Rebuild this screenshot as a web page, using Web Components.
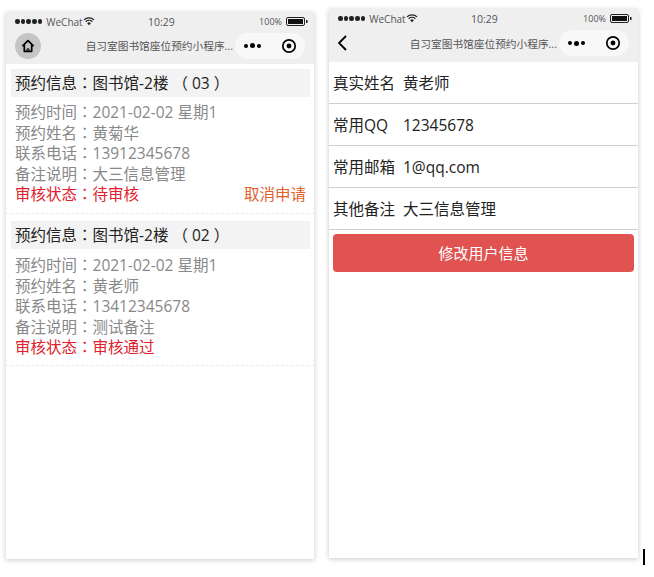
<!DOCTYPE html>
<html lang="zh">
<head>
<meta charset="utf-8">
<title>自习室图书馆座位预约小程序</title>
<style>
html, body { margin: 0; padding: 0; background: #fff; }
body { font-family: "Open Sans", "Noto Sans CJK SC", sans-serif; width: 654px; height: 577px; overflow: hidden; position: relative; }
#shots { display: flex; align-items: flex-start; }
#left { margin: 12px 0 0 6px; }
#right { margin: 9px 0 0 15px; }
#mark { position: absolute; left: 643px; top: 549px; width: 2px; height: 16px; background: #000; }
</style>
</head>
<body>
<div id="shots">
  <phone-frame id="left" nav="home" style="--w:308px;--h:547px;--top:52px;--nb:5px">
    <booking-card head="预约信息：图书馆-2楼 （ 03 ）" time="2021-02-02 星期1" who="黄菊华" tel="13912345678" note="大三信息管理" state="待审核" cancel="取消申请"></booking-card>
    <booking-card head="预约信息：图书馆-2楼 （ 02 ）" time="2021-02-02 星期1" who="黄老师" tel="13412345678" note="测试备注" state="审核通过"></booking-card>
  </phone-frame>
  <phone-frame id="right" nav="back" style="--w:309px;--h:549px;--top:53px;--nb:5px">
    <form-row label="真实姓名">黄老师</form-row>
    <form-row label="常用QQ">12345678</form-row>
    <form-row label="常用邮箱">1@qq.com</form-row>
    <form-row label="其他备注">大三信息管理</form-row>
    <red-button>修改用户信息</red-button>
  </phone-frame>
</div>
<div id="mark"></div>

<script>
"use strict";

const PHONE_STYLE = `
<style>
:host {
  display: block;
  width: var(--w);
  height: var(--h);
  background: #fff;
  box-shadow: 0 1px 5px rgba(0,0,0,.22);
}
.top { background: #efefef; height: var(--top); display: flex; flex-direction: column; }
.status {
  height: 19px;
  flex: none;
  padding: 0 6px 0 9px;
  display: flex;
  align-items: center;
  font-size: 10px;
  color: #555;
  position: relative;
}
.dots { display: flex; gap: 1.2px; margin-right: 4px; }
.dots i { width: 4.5px; height: 4.5px; border-radius: 50%; background: #222; }
.clock { position: absolute; left: 142px; font-size: 10.5px; }
.pct { margin-left: auto; margin-right: 4px; font-size: 9px; }
.nav { flex: 1; display: flex; align-items: center; padding: 1px 9px var(--nb) 9px; }
.home {
  width: 26px; height: 26px; border-radius: 50%;
  background: #c5c5c5; display: flex; align-items: center; justify-content: center;
}
.back { width: 26px; height: 26px; display: flex; align-items: center; }
.title {
  flex: 1;
  text-align: right;
  font-size: 10.7px;
  color: #555;
  white-space: nowrap;
  overflow: hidden;
  padding-right: 2px;
}
.capsule {
  width: 70px; height: 26px; border-radius: 13px;
  background: #f8f8f8;
  display: flex; align-items: center; justify-content: space-between;
  padding: 0 8px 0 9px; box-sizing: border-box; flex: none;
}
.more { display: flex; align-items: center; gap: 2px; }
.more i { width: 4px; height: 4px; border-radius: 50%; background: #000; }
.more i:nth-child(2) { width: 5px; height: 5px; }
</style>
<div class="top">
  <div class="status">
    <span class="dots"><i></i><i></i><i></i><i></i><i></i></span>
    <span>WeChat</span>
    <svg class="wifi" width="12" height="9" viewBox="0 0 10 8">
      <path d="M.5 2.6a6.5 6.5 0 0 1 9 0M2 4.2a4.4 4.4 0 0 1 6 0" fill="none" stroke="#222" stroke-width="1"/>
      <path d="M3.4 5.5a2.3 2.3 0 0 1 3.2 0L5 7.4z" fill="#222"/>
    </svg>
    <span class="clock">10:29</span>
    <span class="pct">100%</span>
    <svg width="22" height="9" viewBox="0 0 22 9">
      <rect x=".5" y=".5" width="18" height="8" rx="1.5" fill="none" stroke="#222"/>
      <rect x="2" y="2" width="15" height="5" fill="#111"/>
      <rect x="20" y="3" width="1.5" height="3" fill="#222"/>
    </svg>
  </div>
  <div class="nav">
    <span class="lead"></span>
    <span class="title">自习室图书馆座位预约小程序...</span>
    <span class="capsule">
      <span class="more"><i></i><i></i><i></i></span>
      <svg width="16" height="16" viewBox="0 0 16 16">
        <circle cx="8" cy="8" r="6.2" fill="none" stroke="#000" stroke-width="1.7"/>
        <circle cx="8" cy="8" r="2.4" fill="#000"/>
      </svg>
    </span>
  </div>
</div>
<slot></slot>
`;

const NAV_ICONS = {
  home: `<span class="home"><svg width="16" height="16" viewBox="0 0 16 16">
    <path d="M2.4 8.2 8 2.6l5.6 5.6M4.3 7v6.3h7.4V7" fill="none" stroke="#000" stroke-width="1.7" stroke-linejoin="round"/>
    <path d="M7 13.3v-2.4h2v2.4" fill="none" stroke="#000" stroke-width="1"/>
  </svg></span>`,
  back: `<span class="back"><svg width="12" height="18" viewBox="0 0 12 18">
    <path d="M8 2 1 9l7 7" fill="none" stroke="#000" stroke-width="1.9"/>
  </svg></span>`
};

class PhoneFrame extends HTMLElement {
  constructor() {
    super();
    this.attachShadow({mode: 'open'}).innerHTML = PHONE_STYLE;
  }

  connectedCallback() {
    const kind = this.getAttribute('nav');
    this.shadowRoot.querySelector('.lead').outerHTML = NAV_ICONS[kind];
  }
}

// the reference has the wide colon centred, which is the TC form of the glyph
const COLON = '<span class="colon" lang="zh-TW">：</span>';

class BookingCard extends HTMLElement {
  constructor() {
    super();
    this.attachShadow({mode: 'open'});
  }

  connectedCallback() {
    const a = (n) => this.getAttribute(n) || '';
    const cancel = a('cancel') ? `<span class="cancel">${a('cancel')}</span>` : '';
    this.shadowRoot.innerHTML = `
<style>
:host {
  display: block;
  padding: 5px 4px 0 5px;
  height: 144px;
  border-bottom: 1px dashed #ececec;
  margin-bottom: 2px;
  font-size: 15.5px;
  line-height: 20.5px;
  color: #888;
}
.head {
  background: #f3f3f3;
  color: #222;
  height: 28px;
  line-height: 29px;
  padding-left: 4px;
  margin-bottom: 5px;
  white-space: nowrap;
}
:host(:last-child) .head { margin-bottom: 6px; }
.row { padding-left: 4px; white-space: nowrap; height: 20.5px; }
.colon { font-family: "Noto Sans CJK TC", sans-serif; line-height: 0; }
.state { color: #e0202c; display: flex; justify-content: space-between; padding-right: 4px; }
.cancel { color: #e2622f; }
</style>
<div class="head">${a('head').replace('：', COLON)}</div>
<div class="row">预约时间${COLON}${a('time')}</div>
<div class="row">预约姓名${COLON}${a('who')}</div>
<div class="row">联系电话${COLON}${a('tel')}</div>
<div class="row">备注说明${COLON}${a('note')}</div>
<div class="row state"><span>审核状态${COLON}${a('state')}</span>${cancel}</div>`;
  }
}

class FormRow extends HTMLElement {
  constructor() {
    super();
    this.attachShadow({mode: 'open'}).innerHTML = `
<style>
:host {
  display: flex;
  align-items: center;
  height: 41px;
  border-bottom: 1px solid #cfcfcf;
  padding-left: 4px;
  font-size: 15.5px;
  color: #222;
}
.label { width: 70px; flex: none; white-space: nowrap; }
</style>
<span class="label"></span><slot></slot>`;
  }

  connectedCallback() {
    this.shadowRoot.querySelector('.label').textContent = this.getAttribute('label');
  }
}

class RedButton extends HTMLElement {
  constructor() {
    super();
    this.attachShadow({mode: 'open'}).innerHTML = `
<style>
:host {
  display: flex;
  align-items: center;
  justify-content: center;
  box-sizing: border-box;
  margin: 4px 4px 0;
  padding-bottom: 1px;
  height: 38px;
  border-radius: 4px;
  background: #e05351;
  color: #fff;
  font-size: 15px;
}
</style>
<slot></slot>`;
  }
}

customElements.define('phone-frame', PhoneFrame);
customElements.define('booking-card', BookingCard);
customElements.define('form-row', FormRow);
customElements.define('red-button', RedButton);
</script>
</body>
</html>
